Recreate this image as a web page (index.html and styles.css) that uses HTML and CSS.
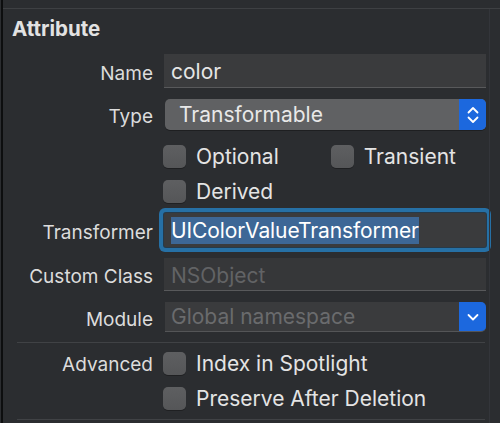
FILE: index.html
```html
<!DOCTYPE html>
<html>
<head>
<meta charset="utf-8">
<link rel="stylesheet" href="styles.css">
</head>
<body>
<div class="app">
  <div class="topline"></div>
  <div class="title">Attribute</div>
  <div class="form">
    <div class="label r-name">Name</div>
    <div class="field r-name">color</div>

    <div class="label r-type">Type</div>
    <div class="popup r-type">
      <span class="popup-text">Transformable</span>
      <span class="popup-btn">
        <svg width="14" height="22" viewBox="0 0 14 22"><path d="M2.5 8.5 L7 4 L11.5 8.5 M2.5 13.5 L7 18 L11.5 13.5" fill="none" stroke="#fff" stroke-width="1.8" stroke-linecap="round" stroke-linejoin="round"/></svg>
      </span>
    </div>

    <div class="checks r-opt">
      <div class="check"><span class="box"></span><span>Optional</span></div>
      <div class="check c-transient"><span class="box"></span><span>Transient</span></div>
    </div>
    <div class="checks r-der">
      <div class="check"><span class="box"></span><span>Derived</span></div>
    </div>

    <div class="label r-trans">Transformer</div>
    <div class="field focus r-trans"><span class="sel">UIColorValueTransformer</span></div>

    <div class="label r-class">Custom Class</div>
    <div class="field dim r-class">NSObject</div>

    <div class="label r-mod">Module</div>
    <div class="popup dis r-mod">
      <span class="popup-text">Global namespace</span>
      <span class="popup-btn">
        <svg width="14" height="12" viewBox="0 0 14 12"><path d="M2.5 4 L7 8.5 L11.5 4" fill="none" stroke="#fff" stroke-width="1.8" stroke-linecap="round" stroke-linejoin="round"/></svg>
      </span>
    </div>
  </div>
  <div class="sep sep1"></div>
  <div class="form">
    <div class="label adv r-idx">Advanced</div>
    <div class="checks r-idx">
      <div class="check"><span class="box"></span><span>Index in Spotlight</span></div>
    </div>
    <div class="checks r-pres">
      <div class="check"><span class="box"></span><span>Preserve After Deletion</span></div>
    </div>
  </div>
  <div class="sep sep2"></div>
</div>
</body>
</html>
```

FILE: styles.css
```css
html, body {
  margin: 0;
  padding: 0;
  background: #2b2d30;
}
body {
  width: 500px;
  height: 423px;
  overflow: hidden;
  font-family: Inter, "Noto Sans", "Liberation Sans", sans-serif;
  font-size: 21px;
  color: #dcdcdc;
}
.app {
  margin-left: 1px;
  border-left: 2px solid #0d0e0f;
  height: 423px;
  box-sizing: border-box;
  padding-top: 8px;
  position: relative;
}
.app::after {
  content: "";
  position: absolute;
  left: 486px;
  top: 9px;
  bottom: 0;
  width: 1px;
  background: #33353a;
}
.topline {
  height: 1px;
  background: #3e4043;
}
.title {
  font-weight: 700;
  font-size: 20.5px;
  line-height: 24px;
  padding-left: 9px;
  margin-top: 8px;
  color: #e2e2e2;
}
.form {
  display: grid;
  grid-template-columns: 150px 322px;
  column-gap: 11px;
}
.label {
  grid-column: 1;
  text-align: right;
  align-self: center;
  line-height: 22px;
  font-size: 19px;
  white-space: nowrap;
  padding-top: 5px;
}
.label.adv {
  padding-top: 3px;
  line-height: 19px;
}
.field, .popup, .checks {
  grid-column: 2;
}
.field {
  box-sizing: border-box;
  background: #3a3b3d;
  border-bottom: 1px solid #58595b;
  padding-left: 7px;
  padding-top: 2px;
  display: flex;
  align-items: center;
  color: #e6e6e6;
}
.field.dim {
  background: #363739;
  color: #626365;
}
.field.focus {
  box-shadow: 0 0 0 1px #263a4a, 0 0 0 5px #2670a5;
  border-radius: 2px;
  border-bottom: none;
  padding-top: 0;
}
.sel {
  background: #3d6796;
  color: #ffffff;
  line-height: 27px;
  letter-spacing: -0.1px;
}
.popup {
  box-sizing: border-box;
  display: flex;
  align-items: center;
  background: #606163;
  border-radius: 5px;
  margin-left: 1px;
  overflow: hidden;
  box-shadow: 0 1px 0 #1e1f21;
}
.popup-text {
  flex: 1;
  padding-left: 14px;
  color: #e8e8e8;
}
.popup-btn {
  width: 27px;
  align-self: stretch;
  background: #1c68de;
  display: flex;
  align-items: center;
  justify-content: center;
}
.popup.dis {
  background: #3a3b3d;
  border-radius: 0 5px 5px 0;
  margin-left: 1px;
  border-bottom: 1px solid #545557;
  box-shadow: none;
}
.popup.dis .popup-text {
  color: #6a6b6d;
  padding-left: 6px;
}
.checks {
  display: flex;
  align-items: center;
}
.check {
  display: flex;
  align-items: center;
  gap: 10px;
  color: #e4e4e4;
}
.c-transient {
  margin-left: 53px;
}
.box {
  width: 23px;
  height: 23px;
  border-radius: 5px;
  background: linear-gradient(#5e5f61, #555658);
  box-shadow: 0 1px 0 #1f2022;
  margin-left: -1px;
}
.sep {
  height: 1px;
  background: #404245;
  margin-left: 14px;
  width: 468px;
}

/* row geometry */
.r-name { grid-row: 1; margin-top: 13px; height: 34px; }
.r-type { grid-row: 2; margin-top: 11px; height: 31px; }
.r-opt  { grid-row: 3; margin-top: 15px; height: 23px; }
.r-der  { grid-row: 4; margin-top: 12px; height: 22px; }
.r-trans{ grid-row: 5; margin-top: 11px; height: 34px; }
.r-class{ grid-row: 6; margin-top: 11px; height: 33px; }
.r-mod  { grid-row: 7; margin-top: 11px; height: 30px; }
.label.r-name, .label.r-type, .label.r-trans, .label.r-class, .label.r-mod, .label.r-idx {
  height: auto;
}
.sep1 { margin-top: 10px; }
.r-idx  { grid-row: 1; margin-top: 9px; height: 22px; }
.r-pres { grid-row: 2; margin-top: 13px; height: 22px; }
.sep2 { margin-top: 10px; }
```
